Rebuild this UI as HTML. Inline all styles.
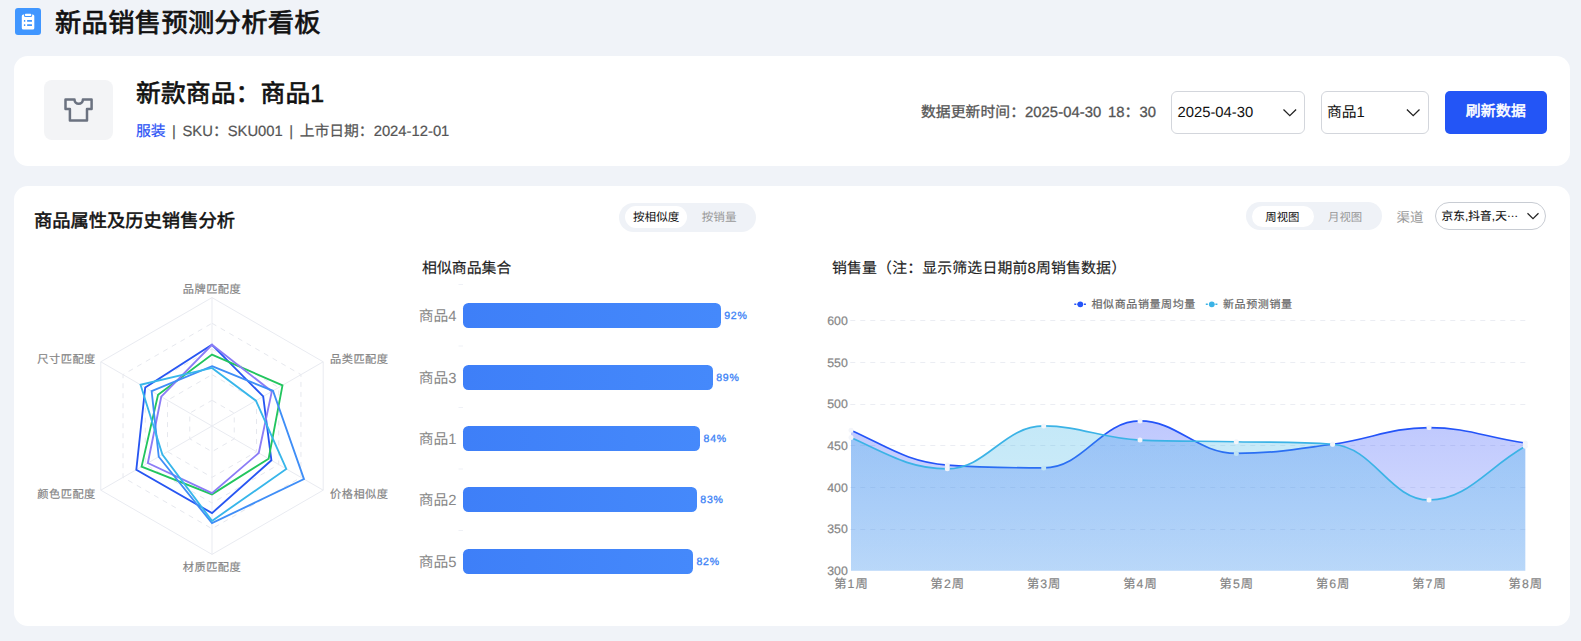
<!DOCTYPE html>
<html lang="zh-CN">
<head>
<meta charset="utf-8">
<title>新品销售预测分析看板</title>
<style>
*{box-sizing:border-box;margin:0;padding:0}
html,body{width:1581px;height:641px;overflow:hidden}
body{background:#f0f3f8;font-family:"Liberation Sans",sans-serif;color:#111;position:relative;text-rendering:geometricPrecision}
.abs{position:absolute;white-space:nowrap}
.card{position:absolute;left:14px;width:1555.8px;background:#fff;border-radius:14px}
#c1{top:56px;height:110px}
#c2{top:186px;height:440.4px}
.ticon{left:14.8px;top:7.9px;width:26.4px;height:27px;border-radius:3px;background:#4096ff}
.title{left:55px;top:4.7px;height:36px;line-height:36px;font-size:26.3px;font-weight:400;color:#111;-webkit-text-stroke:0.7px #111;letter-spacing:0.3px}
.pbox{left:44.2px;top:79.7px;width:68.6px;height:60.8px;border-radius:8px;background:#f3f4f6}
.pname{left:136px;top:77.8px;height:34px;line-height:34px;font-size:24.8px;font-weight:400;color:#111;-webkit-text-stroke:0.65px #111;letter-spacing:0.1px}
.psub{left:136px;top:121px;height:22px;line-height:22px;font-size:14.8px;color:#555;word-spacing:2.4px;-webkit-text-stroke:0.2px #555}
.psub b{font-weight:400;color:#2b53f5;-webkit-text-stroke:0.2px #2b53f5}
.upd{left:921px;top:101.5px;height:22px;line-height:22px;font-size:14.8px;color:#555;font-weight:400;-webkit-text-stroke:0.3px #555;word-spacing:2.5px;letter-spacing:0.06px}
.sel{top:91.4px;height:42.2px;border:1px solid #d3d6dc;border-radius:6px;background:#fff;font-size:14.8px;line-height:42px;padding-left:5.3px;color:#111}
.btn{left:1444.6px;top:91.4px;width:102.6px;height:42.2px;border-radius:5px;background:#2355f6;color:#fff;font-size:14.8px;font-weight:400;-webkit-text-stroke:0.55px #fff;letter-spacing:0.3px;line-height:43.6px;text-align:center}
.h2{left:34px;top:207.7px;height:26px;line-height:26px;font-size:18.27px;font-weight:400;color:#111;-webkit-text-stroke:0.55px #111}
.pill{background:#eff2f7;border-radius:15px}
.pact{background:#fff;border-radius:11px}
.t11{font-size:11.6px;height:16px;line-height:16px}
.h3{font-size:14.9px;height:22px;line-height:22px;font-weight:400;color:#222;-webkit-text-stroke:0.15px #222}
.bl{position:absolute;left:380px;width:76.5px;text-align:right;height:22px;line-height:22px;font-size:14.8px;color:#888;white-space:nowrap}
.bar{position:absolute;left:463px;height:25px;border-radius:5.5px;background:linear-gradient(90deg,#3e7ff8,#4589fb)}
.bv{position:absolute;height:14px;line-height:14px;font-size:10.5px;color:#3b82f6;white-space:nowrap;font-weight:400;-webkit-text-stroke:0.3px #3b82f6;letter-spacing:0.8px}
.yl{position:absolute;left:800px;width:47.8px;text-align:right;height:16px;line-height:16px;font-size:12.3px;color:#868686;white-space:nowrap;-webkit-text-stroke:0.2px #868686}
.xl{position:absolute;top:575.3px;width:61px;text-align:center;height:18px;line-height:18px;font-size:12.3px;color:#858585;font-weight:400;-webkit-text-stroke:0.18px #858585;white-space:nowrap;letter-spacing:1px}
.rl{position:absolute;height:16px;line-height:16px;font-size:11.2px;color:#858585;font-weight:400;-webkit-text-stroke:0.18px #858585;white-space:nowrap;letter-spacing:0.5px}
.lg{position:absolute;top:297px;height:16px;line-height:16px;font-size:11px;color:#666;font-weight:400;-webkit-text-stroke:0.18px #666;white-space:nowrap;letter-spacing:0.6px}
svg{position:absolute;left:0;top:0;overflow:visible}
</style>
</head>
<body>
<!-- header -->
<div class="abs ticon"></div>
<svg width="1581" height="641" viewBox="0 0 1581 641" style="z-index:5;pointer-events:none">
  <!-- clipboard icon -->
  <rect x="21.8" y="14.4" width="12.5" height="15.2" rx="1.6" fill="#fff"/>
  <rect x="24.0" y="12.6" width="8.1" height="4.3" rx="1.5" fill="#4096ff"/>
  <rect x="24.8" y="13.7" width="6.5" height="2.4" rx="1.0" fill="#fff"/>
  <g fill="#4096ff">
    <rect x="23.9" y="20.0" width="1.4" height="1.8" rx="0.3"/><rect x="27.1" y="20.0" width="4.9" height="1.8" rx="0.3"/>
    <rect x="23.9" y="24.2" width="1.4" height="1.8" rx="0.3"/><rect x="27.1" y="24.2" width="4.9" height="1.8" rx="0.3"/>
  </g>
</svg>
<div class="abs title">新品销售预测分析看板</div>

<!-- card 1 -->
<div class="card" id="c1"></div>
<div class="abs pbox"></div>
<svg width="1581" height="641" viewBox="0 0 1581 641" style="z-index:6">
  <path d="M65.5 99.6 H74.5 A4.2 4.2 0 0 0 82.9 99.6 H91.6 V109 H87 V120.4 H69.9 V109 H65.5 Z" fill="none" stroke="#6b7280" stroke-width="2.5" stroke-linejoin="round"/>
</svg>
<div class="abs pname">新款商品：商品1</div>
<div class="abs psub"><b>服装</b> | SKU：SKU001 | 上市日期：2024-12-01</div>
<div class="abs upd">数据更新时间：2025-04-30 18：30</div>
<div class="abs sel" style="left:1171.2px;width:133.6px">2025-04-30</div>
<div class="abs sel" style="left:1320.6px;width:108.6px">商品1</div>
<div class="abs btn">刷新数据</div>
<svg width="1581" height="641" viewBox="0 0 1581 641" style="z-index:6">
  <path d="M1283.5 109.5 L1289.8 115.6 L1296.1 109.5" fill="none" stroke="#222" stroke-width="1.3"/>
  <path d="M1406.9 109.5 L1413.2 115.6 L1419.5 109.5" fill="none" stroke="#222" stroke-width="1.3"/>
  <path d="M1527.5 213.2 L1533 218.6 L1538.5 213.2" fill="none" stroke="#222" stroke-width="1.2"/>
</svg>

<!-- card 2 -->
<div class="card" id="c2"></div>
<div class="abs h2">商品属性及历史销售分析</div>

<div class="abs pill" style="left:619px;top:203px;width:137px;height:28.6px"></div>
<div class="abs pact" style="left:625.4px;top:206.4px;width:62px;height:22px"></div>
<div class="abs t11" style="left:633px;top:210.3px;color:#111">按相似度</div>
<div class="abs t11" style="left:701.7px;top:210.3px;color:#999">按销量</div>

<div class="abs pill" style="left:1246px;top:202.2px;width:136.4px;height:28px"></div>
<div class="abs pact" style="left:1251.5px;top:205.7px;width:62.4px;height:21.4px"></div>
<div class="abs t11" style="left:1265.3px;top:209.8px;color:#111;font-size:11.4px">周视图</div>
<div class="abs t11" style="left:1328px;top:209.8px;color:#999;font-size:11.4px">月视图</div>
<div class="abs" style="left:1396.6px;top:207.9px;height:20px;line-height:20px;font-size:13.5px;color:#999">渠道</div>
<div class="abs" style="left:1435px;top:202.2px;width:111px;height:28px;border:1px solid #c8ccd3;border-radius:14px;background:#fff;font-size:11.6px;line-height:28px;padding-left:5.6px;letter-spacing:0.12px;color:#111;-webkit-text-stroke:0.15px #111">京东,抖音,天<span style="position:relative;top:-3.5px">…</span></div>

<div class="abs h3" style="left:422px;top:257.7px">相似商品集合</div>
<div class="abs h3" style="left:832px;top:257.7px;letter-spacing:0.15px">销售量（注：显示筛选日期前8周销售数据）</div>

<!-- radar -->
<svg width="1581" height="641" viewBox="0 0 1581 641" style="z-index:4">
<polygon points="212.00,400.32 234.24,413.16 234.24,438.84 212.00,451.68 189.76,438.84 189.76,413.16" fill="none" stroke="#e6e8ee" stroke-width="1" stroke-dasharray="5 5"/>
<polygon points="212.00,374.64 256.48,400.32 256.48,451.68 212.00,477.36 167.52,451.68 167.52,400.32" fill="none" stroke="#e6e8ee" stroke-width="1" stroke-dasharray="5 5"/>
<polygon points="212.00,348.96 278.72,387.48 278.72,464.52 212.00,503.04 145.28,464.52 145.28,387.48" fill="none" stroke="#e6e8ee" stroke-width="1" stroke-dasharray="5 5"/>
<polygon points="212.00,323.28 300.96,374.64 300.96,477.36 212.00,528.72 123.04,477.36 123.04,374.64" fill="none" stroke="#e6e8ee" stroke-width="1" stroke-dasharray="5 5"/>
<polygon points="212.00,297.60 323.20,361.80 323.20,490.20 212.00,554.40 100.80,490.20 100.80,361.80" fill="none" stroke="#e9ebf1" stroke-width="1"/>
<line x1="212.00" y1="426.00" x2="212.00" y2="297.60" stroke="#e9ebf1" stroke-width="1"/>
<line x1="212.00" y1="426.00" x2="323.20" y2="361.80" stroke="#e9ebf1" stroke-width="1"/>
<line x1="212.00" y1="426.00" x2="323.20" y2="490.20" stroke="#e9ebf1" stroke-width="1"/>
<line x1="212.00" y1="426.00" x2="212.00" y2="554.40" stroke="#e9ebf1" stroke-width="1"/>
<line x1="212.00" y1="426.00" x2="100.80" y2="490.20" stroke="#e9ebf1" stroke-width="1"/>
<line x1="212.00" y1="426.00" x2="100.80" y2="361.80" stroke="#e9ebf1" stroke-width="1"/>
<polygon points="212.00,344.80 263.18,396.45 271.41,460.30 212.00,513.10 136.31,469.70 145.23,387.45" fill="none" stroke="#2756f2" stroke-width="1.85" stroke-linejoin="miter"/>
<polygon points="212.00,354.60 282.49,385.30 268.64,458.70 212.00,494.40 141.59,466.65 158.05,394.85" fill="none" stroke="#22c55e" stroke-width="1.85" stroke-linejoin="miter"/>
<polygon points="212.00,344.80 271.84,391.45 258.77,453.00 212.00,493.20 147.83,463.05 161.25,396.70" fill="none" stroke="#8b7cf6" stroke-width="1.85" stroke-linejoin="miter"/>
<polygon points="212.00,366.20 272.97,390.80 303.97,479.10 212.00,523.20 158.74,456.75 151.64,391.15" fill="none" stroke="#3f8ef7" stroke-width="1.85" stroke-linejoin="miter"/>
<polygon points="212.00,367.90 255.91,400.65 286.30,468.90 212.00,520.90 162.38,454.65 140.55,384.75" fill="none" stroke="#38b6ea" stroke-width="1.85" stroke-linejoin="miter"/>
<line x1="458.5" y1="284.5" x2="463" y2="284.5" stroke="#eff1f6" stroke-width="1"/><line x1="458.5" y1="346.0" x2="463" y2="346.0" stroke="#eff1f6" stroke-width="1"/><line x1="458.5" y1="407.5" x2="463" y2="407.5" stroke="#eff1f6" stroke-width="1"/><line x1="458.5" y1="469.0" x2="463" y2="469.0" stroke="#eff1f6" stroke-width="1"/><line x1="458.5" y1="530.5" x2="463" y2="530.5" stroke="#eff1f6" stroke-width="1"/>
</svg>
<div class="rl" style="left:152px;width:120px;text-align:center;top:281.7px">品牌匹配度</div>
<div class="rl" style="left:330px;top:351.5px">品类匹配度</div>
<div class="rl" style="left:330px;top:487px">价格相似度</div>
<div class="rl" style="left:152px;width:120px;text-align:center;top:559.5px">材质匹配度</div>
<div class="rl" style="left:0px;width:95.8px;text-align:right;top:487px">颜色匹配度</div>
<div class="rl" style="left:0px;width:95.8px;text-align:right;top:351.5px">尺寸匹配度</div>

<!-- bars -->
<div class="bl" style="top:305.9px">商品4</div><div class="bar" style="top:302.8px;width:258.0px"></div><div class="bv" style="top:308.7px;left:724.2px">92%</div>
<div class="bl" style="top:367.7px">商品3</div><div class="bar" style="top:364.6px;width:250.0px"></div><div class="bv" style="top:370.5px;left:716.2px">89%</div>
<div class="bl" style="top:429.3px">商品1</div><div class="bar" style="top:426.2px;width:237.3px"></div><div class="bv" style="top:432.1px;left:703.5px">84%</div>
<div class="bl" style="top:490.2px">商品2</div><div class="bar" style="top:487.1px;width:234.1px"></div><div class="bv" style="top:493.0px;left:700.3px">83%</div>
<div class="bl" style="top:551.9px">商品5</div><div class="bar" style="top:548.8px;width:230.2px"></div><div class="bv" style="top:554.7px;left:696.4px">82%</div>


<!-- line chart -->
<svg width="1581" height="641" viewBox="0 0 1581 641" style="z-index:4">
<defs>
<linearGradient id="g1" gradientUnits="userSpaceOnUse" x1="0" y1="420.9" x2="0" y2="570.8"><stop offset="0" stop-color="#2848fa" stop-opacity="0.30"/><stop offset="1" stop-color="#2848fa" stop-opacity="0.16"/></linearGradient>
<linearGradient id="g2" gradientUnits="userSpaceOnUse" x1="0" y1="425.9" x2="0" y2="570.8"><stop offset="0" stop-color="#3bb3e6" stop-opacity="0.30"/><stop offset="1" stop-color="#3bb3e6" stop-opacity="0.22"/></linearGradient>
</defs>
<line x1="850.3" y1="529.5" x2="1526.3" y2="529.5" stroke="#ebedf3" stroke-width="1" stroke-dasharray="5 5"/>
<line x1="850.3" y1="487.5" x2="1526.3" y2="487.5" stroke="#ebedf3" stroke-width="1" stroke-dasharray="5 5"/>
<line x1="850.3" y1="445.5" x2="1526.3" y2="445.5" stroke="#ebedf3" stroke-width="1" stroke-dasharray="5 5"/>
<line x1="850.3" y1="404.5" x2="1526.3" y2="404.5" stroke="#ebedf3" stroke-width="1" stroke-dasharray="5 5"/>
<line x1="850.3" y1="362.5" x2="1526.3" y2="362.5" stroke="#ebedf3" stroke-width="1" stroke-dasharray="5 5"/>
<line x1="850.3" y1="320.5" x2="1526.3" y2="320.5" stroke="#ebedf3" stroke-width="1" stroke-dasharray="5 5"/>
<path d="M851.00 430.25 C888.20 447.13 907.62 462.04 947.33 465.05 C984.69 467.88 1007.17 467.88 1043.66 467.88 C1084.23 467.88 1100.44 420.92 1139.99 420.92 C1177.50 420.92 1196.83 453.39 1236.31 453.39 C1273.90 453.39 1294.31 449.37 1332.64 444.23 C1371.37 439.05 1390.40 427.58 1428.97 427.58 C1467.46 427.58 1486.66 437.64 1525.30 442.99 L1525.30 570.80 L851.00 570.80 Z" fill="url(#g1)"/>
<path d="M851.00 430.25 C888.20 447.13 907.62 462.04 947.33 465.05 C984.69 467.88 1007.17 467.88 1043.66 467.88 C1084.23 467.88 1100.44 420.92 1139.99 420.92 C1177.50 420.92 1196.83 453.39 1236.31 453.39 C1273.90 453.39 1294.31 449.37 1332.64 444.23 C1371.37 439.05 1390.40 427.58 1428.97 427.58 C1467.46 427.58 1486.66 437.64 1525.30 442.99" fill="none" stroke="#2454f8" stroke-width="1.7" stroke-linejoin="round"/>
<circle cx="851.0" cy="430.2" r="2.5" fill="#f3f5fa"/>
<circle cx="947.3" cy="465.1" r="2.5" fill="#f3f5fa"/>
<circle cx="1043.7" cy="467.9" r="2.5" fill="#f3f5fa"/>
<circle cx="1140.0" cy="420.9" r="2.5" fill="#f3f5fa"/>
<circle cx="1236.3" cy="453.4" r="2.5" fill="#f3f5fa"/>
<circle cx="1332.6" cy="444.2" r="2.5" fill="#f3f5fa"/>
<circle cx="1429.0" cy="427.6" r="2.5" fill="#f3f5fa"/>
<circle cx="1525.3" cy="443.0" r="2.5" fill="#f3f5fa"/>
<path d="M851.00 437.57 C887.64 454.28 909.58 468.80 947.33 468.80 C986.64 468.80 1003.59 425.92 1043.66 425.92 C1080.65 425.92 1101.25 438.39 1139.99 440.07 C1178.31 441.74 1197.79 440.90 1236.31 441.74 C1274.85 442.57 1296.89 441.74 1332.64 444.23 C1373.95 447.12 1390.26 500.02 1428.97 500.02 C1467.32 500.02 1486.91 468.05 1525.30 446.32 L1525.30 570.80 L851.00 570.80 Z" fill="url(#g2)"/>
<path d="M851.00 437.57 C887.64 454.28 909.58 468.80 947.33 468.80 C986.64 468.80 1003.59 425.92 1043.66 425.92 C1080.65 425.92 1101.25 438.39 1139.99 440.07 C1178.31 441.74 1197.79 440.90 1236.31 441.74 C1274.85 442.57 1296.89 441.74 1332.64 444.23 C1373.95 447.12 1390.26 500.02 1428.97 500.02 C1467.32 500.02 1486.91 468.05 1525.30 446.32" fill="none" stroke="#3bb3e6" stroke-width="1.7" stroke-linejoin="round"/>
<circle cx="851.0" cy="437.6" r="2.5" fill="#f3f5fa"/>
<circle cx="947.3" cy="468.8" r="2.5" fill="#f3f5fa"/>
<circle cx="1043.7" cy="425.9" r="2.5" fill="#f3f5fa"/>
<circle cx="1140.0" cy="440.1" r="2.5" fill="#f3f5fa"/>
<circle cx="1236.3" cy="441.7" r="2.5" fill="#f3f5fa"/>
<circle cx="1332.6" cy="444.2" r="2.5" fill="#f3f5fa"/>
<circle cx="1429.0" cy="500.0" r="2.5" fill="#f3f5fa"/>
<circle cx="1525.3" cy="446.3" r="2.5" fill="#f3f5fa"/>
<g>
  <line x1="1074.3" y1="304.3" x2="1086.3" y2="304.3" stroke="#2454f8" stroke-width="1.6" stroke-dasharray="2 1.2"/>
  <circle cx="1080.3" cy="304.3" r="2.9" fill="#2454f8"/>
  <line x1="1205.8" y1="304.3" x2="1217.8" y2="304.3" stroke="#3bb3e6" stroke-width="1.6" stroke-dasharray="2 1.2"/>
  <circle cx="1211.8" cy="304.3" r="2.9" fill="#3bb3e6"/>
</g>
</svg>
<div class="lg" style="left:1091.5px">相似商品销量周均量</div>
<div class="lg" style="left:1223px">新品预测销量</div>
<div class="yl" style="top:562.8px">300</div>
<div class="yl" style="top:521.2px">350</div>
<div class="yl" style="top:479.5px">400</div>
<div class="yl" style="top:437.9px">450</div>
<div class="yl" style="top:396.3px">500</div>
<div class="yl" style="top:354.6px">550</div>
<div class="yl" style="top:313.0px">600</div>

<div class="xl" style="left:821.0px">第1周</div>
<div class="xl" style="left:917.3px">第2周</div>
<div class="xl" style="left:1013.7px">第3周</div>
<div class="xl" style="left:1110.0px">第4周</div>
<div class="xl" style="left:1206.3px">第5周</div>
<div class="xl" style="left:1302.6px">第6周</div>
<div class="xl" style="left:1399.0px">第7周</div>
<div class="xl" style="left:1495.3px">第8周</div>

</body>
</html>
